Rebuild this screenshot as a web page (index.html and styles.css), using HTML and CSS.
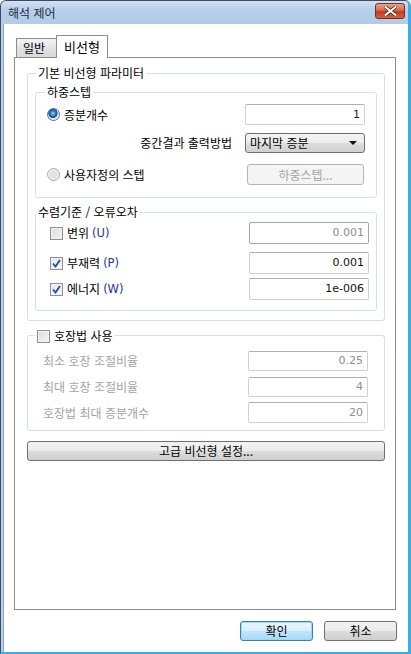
FILE: index.html
```html
<!DOCTYPE html>
<html lang="ko">
<head>
    <meta charset="UTF-8">
    <meta name="viewport" content="width=device-width, initial-scale=1.0">
    <title>해석 제어</title>
    <link rel="stylesheet" href="styles.css">
</head>
<body>
    <div class="window">
        <div class="titlebar">
            <span class="title">해석 제어</span>
            <span class="close">
                <svg width="13" height="10" viewBox="0 0 13 10">
                    <path d="M1.5 1 L11.5 9 M11.5 1 L1.5 9" stroke="#3b1a12" stroke-width="3.4" stroke-linecap="square"/>
                    <path d="M1.5 1 L11.5 9 M11.5 1 L1.5 9" stroke="#fff" stroke-width="2" stroke-linecap="square"/>
                </svg>
            </span>
        </div>
        <div class="client">
            <div class="tabs">
                <div class="tab">일반</div>
                <div class="tab active">비선형</div>
            </div>
            <div class="panel">
                <div class="group g-basic">
                    <span class="legend">기본 비선형 파라미터</span>

                    <div class="group g-step">
                        <span class="legend">하중스텝</span>
                        <div class="row h21">
                            <label class="opt"><span class="radio on"></span>증분개수</label>
                            <div class="input w120 blue">1</div>
                        </div>
                        <div class="row h20 mt8 end">
                            <span class="text">중간결과 출력방법</span>
                            <div class="combo">마지막 증분<span class="arrow"></span></div>
                        </div>
                        <div class="row h21 mt11">
                            <label class="opt"><span class="radio"></span>사용자정의 스텝</label>
                            <div class="btn off w117">하중스텝...</div>
                        </div>
                    </div>

                    <div class="group g-conv">
                        <span class="legend">수렴기준 / 오류오차</span>
                        <div class="row h22">
                            <label class="opt"><span class="check"></span>변위 <span class="key">(U)</span></label>
                            <div class="input w120 off dark">0.001</div>
                        </div>
                        <div class="row h22 mt8">
                            <label class="opt"><span class="check on"><svg width="9" height="9" viewBox="0 0 9 9"><path d="M1 4.5 L3.5 7.5 L8 1" fill="none" stroke="#2b46a8" stroke-width="1.8"/></svg></span>부재력 <span class="key">(P)</span></label>
                            <div class="input w120">0.001</div>
                        </div>
                        <div class="row h22 mt4">
                            <label class="opt"><span class="check on"><svg width="9" height="9" viewBox="0 0 9 9"><path d="M1 4.5 L3.5 7.5 L8 1" fill="none" stroke="#2b46a8" stroke-width="1.8"/></svg></span>에너지 <span class="key">(W)</span></label>
                            <div class="input w120">1e-006</div>
                        </div>
                    </div>
                </div>

                <div class="group g-arc">
                    <label class="legend opt"><span class="check"></span>호장법 사용</label>
                    <div class="row h20">
                        <span class="text off">최소 호장 조절비율</span>
                        <div class="input w120 off">0.25</div>
                    </div>
                    <div class="row h20 mt6">
                        <span class="text off">최대 호장 조절비율</span>
                        <div class="input w120 off">4</div>
                    </div>
                    <div class="row h21 mt5">
                        <span class="text off">호장법 최대 증분개수</span>
                        <div class="input w120 off">20</div>
                    </div>
                </div>

                <div class="btn wide">고급 비선형 설정...</div>
            </div>
            <div class="actions">
                <div class="btn dlg default">확인</div>
                <div class="btn dlg">취소</div>
            </div>
        </div>
    </div>
</body>
</html>
```

FILE: styles.css
```css
body {
    margin: 0;
    font-family: "Noto Sans CJK KR", "Noto Sans", sans-serif;
    font-size: 12px;
    line-height: 14px;
    color: #000;
    background: #fff;
}
.window {
    width: 411px;
    height: 654px;
    box-sizing: border-box;
    border: 1px solid #3e4b5e;
    border-right: 3px solid #37aee6;
    border-bottom: 2px solid #37aee6;
    border-radius: 6px 6px 0 0;
    background: #b9d0ea;
    overflow: hidden;
    display: flex;
    flex-direction: column;
}
.titlebar {
    height: 23px;
    flex: none;
    display: flex;
    align-items: center;
    justify-content: space-between;
    padding: 0 3px 0 7px;
    background: linear-gradient(#cfe0f3, #b8cfea 40%, #b3cbe7);
}
.title {
    color: #1e2a3a;
    margin-top: 1px;
}
.close {
    width: 28px;
    height: 14px;
    margin-top: -3px;
    border: 1px solid #6b3324;
    border-radius: 3px;
    background: linear-gradient(#eaa48e, #d8684d 45%, #c43a20 55%, #d9603f);
    display: flex;
    align-items: center;
    justify-content: center;
}
.client {
    flex: 1;
    margin-left: 2px;
    border-left: 1px solid #8ea5c2;
    background: #fff;
    padding: 11px 0 0 10px;
}
.tabs {
    display: flex;
    align-items: flex-end;
    height: 22px;
    padding-left: 2px;
}
.tab {
    box-sizing: border-box;
    height: 19px;
    width: 41px;
    padding-left: 6px;
    line-height: 18px;
    border: 1px solid #898c95;
    border-bottom: none;
    background: linear-gradient(#f3f3f3, #e3e3e3 50%, #d9d9d9);
}
.tab.active {
    position: relative;
    z-index: 1;
    height: 23px;
    width: 52px;
    margin-left: -1px;
    margin-bottom: -1px;
    padding-left: 7px;
    line-height: 21px;
    font-size: 13px;
    background: #fff;
}
.panel {
    box-sizing: border-box;
    width: 382px;
    height: 553px;
    border: 1px solid #898c95;
    padding: 15px 10px 0 12px;
}
.group {
    position: relative;
    box-sizing: border-box;
    border: 1px solid #d5dfe5;
    border-radius: 3px;
}
.legend {
    position: absolute;
    top: -8px;
    left: 8px;
    padding: 0 2px;
    background: #fff;
    line-height: 14px;
}
.g-basic {
    height: 248px;
    padding: 18px 7px 0 7px;
}
.g-step {
    height: 106px;
    padding: 11px 11px 0 11px;
}
.g-step .legend {
    left: 9px;
}
.g-conv {
    height: 99px;
    margin-top: 14px;
    padding: 9px 7px 0 14px;
}
.g-conv .legend {
    left: 0;
}
.g-arc {
    height: 96px;
    margin-top: 14px;
    padding: 15px 16px 0 15px;
}
.g-arc .legend {
    left: 7px;
    top: -7px;
}
.row {
    display: flex;
    align-items: center;
    justify-content: space-between;
}
.row.end {
    justify-content: flex-end;
    gap: 13px;
}
.h20 { height: 20px; }
.h21 { height: 21px; }
.h22 { height: 22px; }
.mt4 { margin-top: 4px; }
.mt5 { margin-top: 5px; }
.mt6 { margin-top: 6px; }
.mt8 { margin-top: 8px; }
.mt11 { margin-top: 11px; }
.opt {
    display: flex;
    align-items: center;
    gap: 4px;
}
.key {
    font-family: "DejaVu Sans", sans-serif;
    font-size: 11.5px;
    color: #1f3590;
    margin-left: -1px;
}
.text.off, .off {
    color: #a3a3a3;
}
.radio {
    width: 11px;
    height: 11px;
    border: 1px solid #a4a9ae;
    border-radius: 50%;
    background: radial-gradient(circle at 50% 50%, #e2e2e2 40%, #f8f8f8 75%);
}
.radio.on {
    border-color: #5b6f86;
    background: radial-gradient(circle at 45% 40%, #9fd3f6 0, #2a78c4 30%, #114a8e 48%, #e2e6ea 55%, #f7f7f7 80%);
}
.check {
    box-sizing: border-box;
    width: 13px;
    height: 13px;
    border: 1px solid #8e8f8f;
    background: linear-gradient(135deg, #dcdcdc, #f4f4f4);
    box-shadow: inset 0 0 0 1px #f2f2f2;
    display: flex;
    align-items: center;
    justify-content: center;
}
.check.on {
    background: linear-gradient(135deg, #e6e6e6, #fbfbfb);
}
.input {
    box-sizing: border-box;
    height: 100%;
    border: 1px solid #cdd1d6;
    border-top-color: #acafb6;
    border-radius: 2px;
    padding-right: 4px;
    display: flex;
    align-items: center;
    justify-content: flex-end;
    font-family: "DejaVu Sans", sans-serif;
    font-size: 11px;
    color: #111;
    background: #fff;
}
.input.blue {
    color: #12206a;
}
.input.off {
    color: #8d8d8d;
}
.input.dark {
    border-color: #a2a4a8;
}
.w120 { width: 120px; }
.w117 { width: 117px; margin-right: 1px; }
.combo {
    box-sizing: border-box;
    width: 120px;
    height: 100%;
    border: 1px solid #6f6f6f;
    border-radius: 3px;
    background: linear-gradient(#f3f3f3, #ebebeb 50%, #dddddd 51%, #d0d0d0);
    display: flex;
    align-items: center;
    justify-content: space-between;
    padding: 0 7px 0 4px;
}
.arrow {
    width: 0;
    height: 0;
    border-left: 4px solid transparent;
    border-right: 4px solid transparent;
    border-top: 4px solid #111;
}
.btn {
    box-sizing: border-box;
    border: 1px solid #707070;
    border-radius: 3px;
    background: linear-gradient(#f2f2f2, #ebebeb 50%, #dddddd 51%, #cfcfcf);
    display: flex;
    align-items: center;
    justify-content: center;
}
.btn.off {
    height: 100%;
    border-color: #b5b5b5;
    background: #f4f4f4;
    color: #a3a3a3;
}
.btn.wide {
    height: 20px;
    width: 358px;
    margin-top: 10px;
}
.actions {
    display: flex;
    justify-content: flex-end;
    gap: 11px;
    width: 383px;
    margin-top: 11px;
}
.btn.dlg {
    width: 73px;
    height: 20px;
}
.btn.default {
    border-color: #3c7fb1;
    box-shadow: inset 0 0 0 1px #9ed8f4;
    background: linear-gradient(#eaf6fd, #d9f0fc 50%, #bee6fd 51%, #a7d9f5);
}
```
